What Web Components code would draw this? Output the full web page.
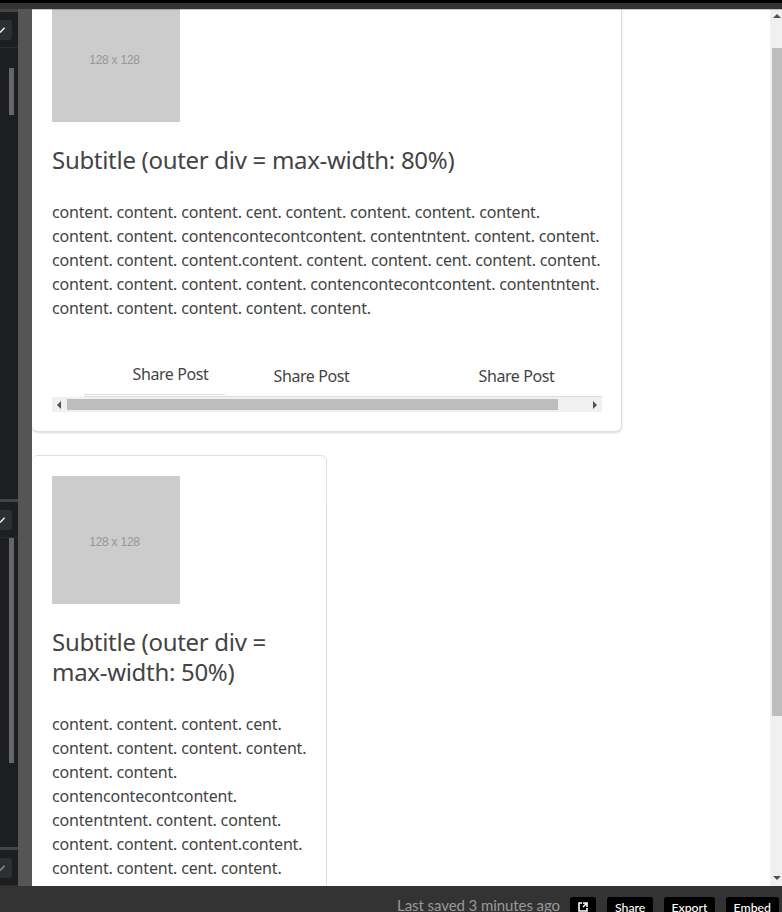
<!DOCTYPE html>
<html>
<head>
<meta charset="utf-8">
<title>Cards</title>
<style>
    html, body { margin: 0; height: 100%; overflow: hidden; background: #fff; }
</style>
</head>
<body>
<app-shell>
    <editor-rail slot="rail"></editor-rail>
    <result-card title-text="Subtitle (outer div = max-width: 80%)" size="590" share></result-card>
    <result-card title-text="Subtitle (outer div = max-width: 50%)" size="295"></result-card>
    <save-footer slot="footer"></save-footer>
</app-shell>
<script>
const TEXT = 'content. content. content. cent. content. content. content. content. content. content. contencontecontcontent. contentntent. content. content. content. content. content.content. content. content. cent. content. content. content. content. content. content. contencontecontcontent. contentntent. content. content. content. content. content.';

const components = [
    {
        name: 'app-shell',
        class: class AppShell extends HTMLElement {
            constructor() {
                super();
                this.attachShadow({ mode: 'open' });
            }
            connectedCallback() {
                this.shadowRoot.innerHTML = `
                    <style>
                        :host {
                            display: grid;
                            grid-template-rows: 9px 1fr 26px;
                            height: 912px;
                            width: 782px;
                            overflow: hidden;
                        }
                        .top {
                            background: #333;
                            border-top: 3px solid #000;
                            box-sizing: border-box;
                        }
                        .middle {
                            display: grid;
                            grid-template-columns: 18px 14px 1fr;
                            min-height: 0;
                        }
                        .gutter { background: #555; }
                        .result {
                            display: grid;
                            grid-template-columns: 1fr 12px;
                            min-height: 0;
                            min-width: 0;
                            position: relative;
                        }
                        .result::before {
                            content: '';
                            position: absolute;
                            inset: 0 0 auto 0;
                            height: 1px;
                            background: rgba(0,0,0,.2);
                            z-index: 1;
                        }
                        .preview {
                            overflow: hidden;
                            min-height: 0;
                            background: #fff;
                        }
                        .stack {
                            margin-top: -36px;
                            display: flex;
                            flex-direction: column;
                            gap: 23px;
                            align-items: flex-start;
                        }
                    </style>
                    <div class="top"></div>
                    <div class="middle">
                        <slot name="rail"></slot>
                        <div class="gutter"></div>
                        <div class="result">
                            <div class="preview"><div class="stack"><slot></slot></div></div>
                            <page-scrollbar></page-scrollbar>
                        </div>
                    </div>
                    <slot name="footer"></slot>
                `;
            }
        }
    },
    {
        name: 'editor-rail',
        class: class EditorRail extends HTMLElement {
            constructor() {
                super();
                this.attachShadow({ mode: 'open' });
            }
            connectedCallback() {
                this.shadowRoot.innerHTML = `
                    <style>
                        :host {
                            display: grid;
                            grid-template-rows: 490px 348px 1fr;
                            min-height: 0;
                            background: #1d1e22;
                        }
                    </style>
                    <editor-panel thumb-top="20" thumb-height="47"></editor-panel>
                    <editor-panel thumb-top="0" thumb-height="225"></editor-panel>
                    <editor-panel dim></editor-panel>
                `;
            }
        }
    },
    {
        name: 'editor-panel',
        class: class EditorPanel extends HTMLElement {
            constructor() {
                super();
                this.attachShadow({ mode: 'open' });
            }
            connectedCallback() {
                const top = this.getAttribute('thumb-top');
                const height = this.getAttribute('thumb-height');
                this.shadowRoot.innerHTML = `
                    <style>
                        :host {
                            display: block;
                            min-height: 0;
                            overflow: hidden;
                            border-top: 3px solid #444;
                            box-sizing: border-box;
                        }
                        :host(:first-child) { border-top: 2px solid #1a1a1a; }
                        .head {
                            height: 36px;
                            box-sizing: border-box;
                            padding-top: 8px;
                            border-bottom: 1px solid #2a2b2f;
                        }
                        .btn {
                            width: 12px;
                            height: 20px;
                            background: #2e2f33;
                            border-radius: 0 3px 3px 0;
                            display: flex;
                            align-items: center;
                        }
                        :host([dim]) svg { opacity: .5; }
                        svg { display: block; }
                        .thumb {
                            width: 5px;
                            background: #666;
                            margin-left: 9px;
                            margin-top: ${top}px;
                            height: ${height}px;
                        }
                    </style>
                    <div class="head">
                        <div class="btn">
                            <svg width="6" height="6" viewBox="0 0 6 6"><path d="M0 5.5L1 4.5L4.6 .8" stroke="#eee" stroke-width="1.5" fill="none"/></svg>
                        </div>
                    </div>
                    ${height ? '<div class="thumb"></div>' : ''}
                `;
            }
        }
    },
    {
        name: 'page-scrollbar',
        class: class PageScrollbar extends HTMLElement {
            constructor() {
                super();
                this.attachShadow({ mode: 'open' });
            }
            connectedCallback() {
                this.shadowRoot.innerHTML = `
                    <style>
                        :host {
                            display: flex;
                            flex-direction: column;
                            background: #f0f0f0;
                            min-height: 0;
                            padding-left: 2px;
                        }
                        .arrow {
                            height: 39px;
                            display: flex;
                            justify-content: center;
                            padding-top: 5px;
                            box-sizing: border-box;
                        }
                        .thumb { height: 668px; background: #bdbdbd; }
                        .rest { flex: 1; display: flex; align-items: flex-end; justify-content: center; padding-bottom: 6px; }
                        svg { display: block; }
                    </style>
                    <div class="arrow"><svg width="8" height="4" viewBox="0 0 8 4"><path d="M0 4L4 0L8 4Z" fill="#505050"/></svg></div>
                    <div class="thumb"></div>
                    <div class="rest"><svg width="8" height="4" viewBox="0 0 8 4"><path d="M0 0L8 0L4 4Z" fill="#505050"/></svg></div>
                `;
            }
        }
    },
    {
        name: 'result-card',
        class: class ResultCard extends HTMLElement {
            static observedAttributes = ['title-text', 'size', 'share'];
            constructor() {
                super();
                this.attachShadow({ mode: 'open' });
            }
            connectedCallback() {
                const size = this.getAttribute('size');
                this.shadowRoot.innerHTML = `
                    <style>
                        :host {
                            display: block;
                            box-sizing: border-box;
                            width: ${size}px;
                            background: #fff;
                            border: 1px solid rgba(0,0,0,.125);
                            border-left: none;
                            border-radius: 6px;
                            padding: 20px 19px 19px 20px;
                            font: 16px/24px "Noto Sans", sans-serif;
                            letter-spacing: -.176px;
                            color: #444;
                        }
                        :host([share]) { box-shadow: 0 1px 2px rgba(0,0,0,.15); }
                        h2 {
                            font-size: 24px;
                            line-height: 30px;
                            font-weight: 400;
                            letter-spacing: -.3px;
                            margin: 23px 0 25px;
                        }
                        p { margin: 0; }
                        .row { margin-top: 42px; }
                    </style>
                    <placeholder-box></placeholder-box>
                    <h2>${this.getAttribute('title-text')}</h2>
                    <p>${TEXT}</p>
                    ${this.hasAttribute('share') ? '<div class="row"><share-row></share-row></div>' : ''}
                `;
            }
        }
    },
    {
        name: 'placeholder-box',
        class: class PlaceholderBox extends HTMLElement {
            constructor() {
                super();
                this.attachShadow({ mode: 'open' });
            }
            connectedCallback() {
                this.shadowRoot.innerHTML = `
                    <style>
                        :host {
                            display: flex;
                            box-sizing: border-box;
                            width: 128px;
                            height: 128px;
                            padding: 4px 3px 0 0;
                            align-items: center;
                            justify-content: center;
                            background: #ccc;
                            color: #969696;
                            letter-spacing: -.25px;
                            font: 12px "Liberation Sans", sans-serif;
                        }
                    </style>
                    128 x 128
                `;
            }
        }
    },
    {
        name: 'share-row',
        class: class ShareRow extends HTMLElement {
            constructor() {
                super();
                this.attachShadow({ mode: 'open' });
            }
            connectedCallback() {
                this.shadowRoot.innerHTML = `
                    <style>
                        :host { display: block; letter-spacing: -.4px; }
                        .scroll {
                            display: flex;
                            height: 35px;
                            box-sizing: border-box;
                            margin-left: 32px;
                            overflow: hidden;
                            border-bottom: 1px solid #ddd;
                        }
                        .tab { flex: none; width: 141px; text-align: center; }
                        .tab:first-child { border-bottom: 1px solid #ddd; height: 33px; padding-left: 32px; box-sizing: border-box; }
                        .tab:nth-child(2) { margin: 2px 0 0 16px; }
                        .tab:nth-child(3) { margin: 2px 0 0 64px; }
                        .bar {
                            height: 15px;
                            background: #f0f0f0;
                            display: flex;
                            align-items: center;
                        }
                        .bar svg { display: block; flex: none; }
                        .left { margin: 0 6px 0 5px; }
                        .thumb { width: 491px; height: 11px; background: #bdbdbd; }
                        .right { margin: 0 5px 0 auto; }
                    </style>
                    <div class="scroll">
                        <div class="tab">Share Post</div>
                        <div class="tab">Share Post</div>
                        <div class="tab">Share Post</div>
                    </div>
                    <div class="bar">
                        <svg class="left" width="4" height="8" viewBox="0 0 4 8"><path d="M4 0L0 4L4 8Z" fill="#505050"/></svg>
                        <div class="thumb"></div>
                        <svg class="right" width="4" height="8" viewBox="0 0 4 8"><path d="M0 0L4 4L0 8Z" fill="#505050"/></svg>
                    </div>
                `;
            }
        }
    },
    {
        name: 'save-footer',
        class: class SaveFooter extends HTMLElement {
            constructor() {
                super();
                this.attachShadow({ mode: 'open' });
            }
            connectedCallback() {
                this.shadowRoot.innerHTML = `
                    <style>
                        :host {
                            display: flex;
                            justify-content: flex-end;
                            align-items: flex-start;
                            gap: 11px;
                            background: #333;
                            padding: 11px 3px 0 0;
                            overflow: hidden;
                            font: 12.3px/18px Lato, sans-serif;
                        }
                        .saved { color: #999; font-size: 15px; letter-spacing: -.08px; margin-right: -1px; line-height: 17px; }
                        .btn {
                            background: #000;
                            color: #fff;
                            border-radius: 3px;
                            height: 24px;
                            padding: 2px 8px 0;
                            box-sizing: border-box;
                            font-weight: 500;
                        }
                        .btn.export { padding: 2px 7px 0; }
                        .icon { width: 26px; padding: 5px 0 0 8px; }
                        svg { display: block; }
                    </style>
                    <span class="saved">Last saved 3 minutes ago</span>
                    <span class="btn icon"><svg width="10" height="10" viewBox="0 0 10 10"><path d="M4 1H1V9H9V6" stroke="#fff" stroke-width="1.6" fill="none"/><path d="M5 1H9V5M9 1L5 5" stroke="#fff" stroke-width="1.6" fill="none"/></svg></span>
                    <span class="btn">Share</span>
                    <span class="btn export">Export</span>
                    <span class="btn">Embed</span>
                `;
            }
        }
    }
];
components.forEach(component => {
    customElements.define(component.name, component.class);
});
</script>
</body>
</html>
